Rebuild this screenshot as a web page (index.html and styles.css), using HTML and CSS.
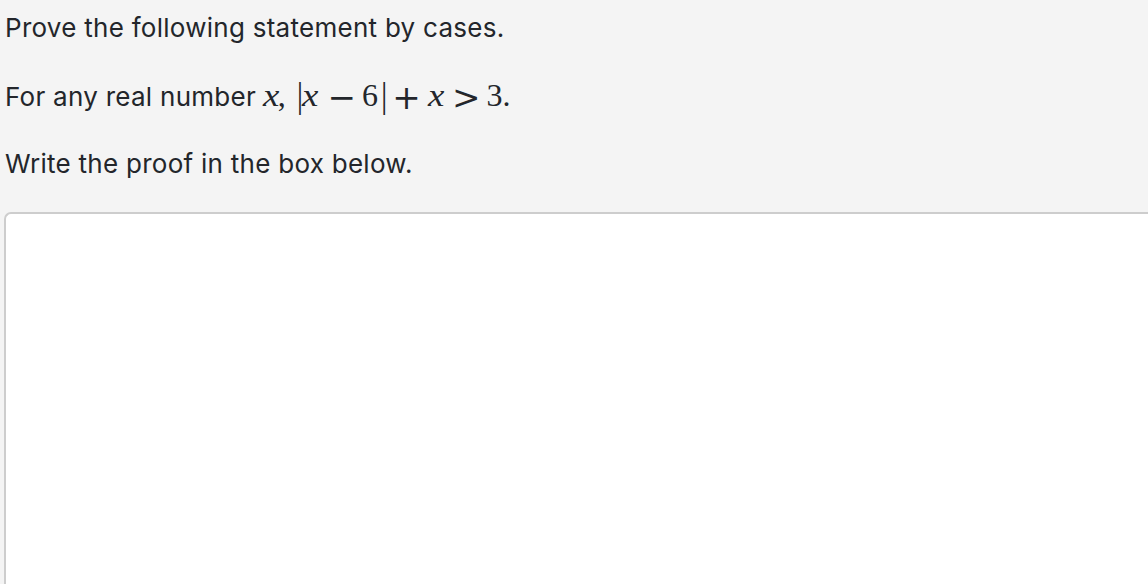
FILE: index.html
```html
<!DOCTYPE html>
<html>
<head>
<meta charset="utf-8">
<link rel="stylesheet" href="styles.css">
</head>
<body>
<div class="page">
  <p class="line">Prove the following statement by cases.</p>
  <p class="line">For any real number <span class="math"><i>x</i>,</span><span class="math"><span class="bar bar1">|</span><i>x</i><span class="op minus">−</span>6<span class="bar bar2">|</span><span class="op plus">+</span><i>x</i><span class="op gt">&gt;</span>3.</span></p>
  <p class="line">Write the proof in the box below.</p>
  <div class="box"></div>
</div>
</body>
</html>
```
FILE: styles.css
```css
html, body {
  margin: 0;
  padding: 0;
  background: #f4f4f4;
  overflow: hidden;
  height: 100%;
}
.page {
  padding: 0 0 0 5px;
  height: 100%;
  display: flex;
  flex-direction: column;
  font-family: Inter, "Liberation Sans", sans-serif;
  font-size: 26px;
  letter-spacing: 0.27px;
  color: #23262b;
}
.line {
  margin: 0;
  flex: none;
  height: 67px;
  line-height: 30px;
  padding-top: 14px;
  box-sizing: border-box;
  white-space: nowrap;
}
.line:first-child {
  padding-top: 13px;
  height: 68px;
}
.math {
  font-family: "Liberation Serif", serif;
  font-size: 32px;
  line-height: 0;
  letter-spacing: 0;
}
.math i {
  font-style: italic;
  display: inline-block;
  transform: scaleX(1.15);
}
.bar {
  display: inline-block;
  transform: scaleY(1.1);
}
.bar1 {
  margin-left: 11px;
}
.bar2 {
  margin-left: 3px;
}
.op {
  font-family: "DejaVu Serif", serif;
  font-size: 34px;
  font-weight: 300;
  display: inline-block;
  transform: translateY(3px);
}
.minus {
  margin: 0 6px 0 10px;
}
.plus {
  margin: 0 8px 0 5px;
}
.gt {
  margin: 0 6px 0 9px;
}
.box {
  flex: 1;
  margin-top: 10px;
  margin-left: -1px;
  background: #fff;
  border: 2px solid #cdcdcd;
  border-right: none;
  border-bottom: none;
  border-top-left-radius: 7px;
}
```
